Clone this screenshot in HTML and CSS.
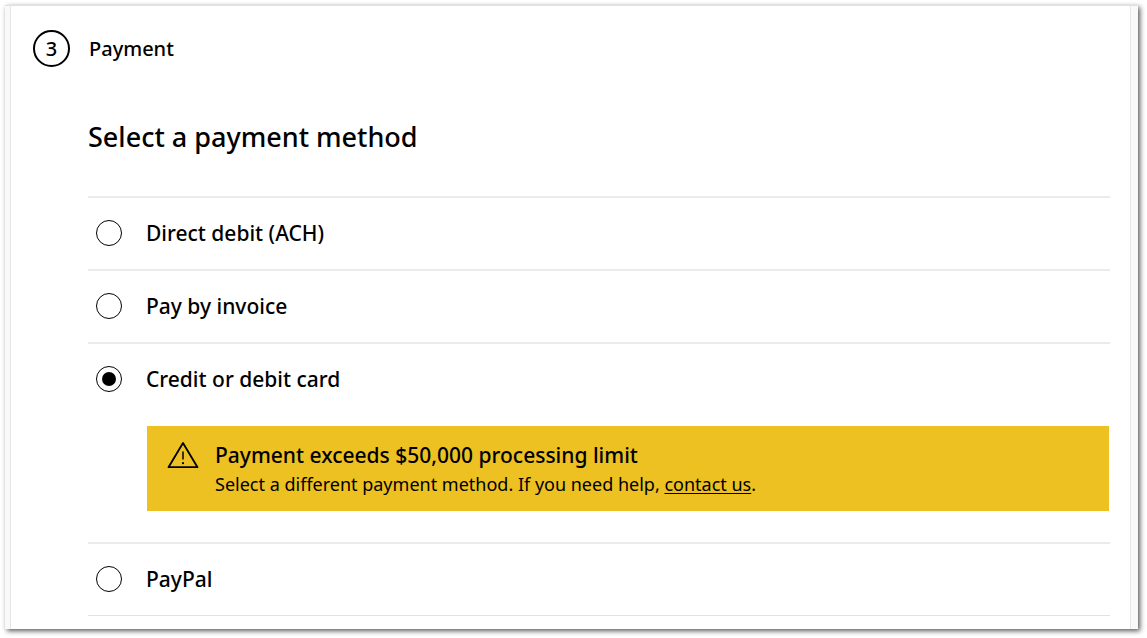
FILE: index.html
```html
<!DOCTYPE html>
<html lang="en">
<head>
  <meta charset="utf-8">
  <meta name="viewport" content="width=device-width, initial-scale=1">
  <title>Payment</title>
  <link rel="stylesheet" href="styles.css">
</head>

<body>

<main class="page">
  <div class="panel">

    <!-- step header -->
    <header class="step">
      <span class="step-number">3</span>
      <h1 class="step-title">Payment</h1>
    </header>

    <form class="payment">
      <h2 class="payment-title" id="payment-title">Select a payment method</h2>

      <ul class="methods" role="radiogroup" aria-labelledby="payment-title">
        <li class="method">
          <label class="method-label">
            <input class="radio" type="radio" name="method" value="ach">
            Direct debit (ACH)
          </label>
        </li>
        <li class="method">
          <label class="method-label">
            <input class="radio" type="radio" name="method" value="invoice">
            Pay by invoice
          </label>
        </li>
        <li class="method">
          <label class="method-label">
            <input class="radio" type="radio" name="method" value="card" checked>
            Credit or debit card
          </label>

          <!-- limit warning -->
          <div class="alert" role="alert">
            <svg class="alert-icon" viewBox="0 0 32 28" width="32" height="28" aria-hidden="true">
              <path d="M16 2 L30.5 26.2 H1.5 Z" fill="none" stroke="currentColor" stroke-width="1.8" stroke-linejoin="round"/>
              <path d="M16 10.5 V18.5" stroke="currentColor" stroke-width="1.5"/>
              <circle cx="16" cy="22.2" r="1.1" fill="currentColor"/>
            </svg>
            <div>
              <p class="alert-title">Payment exceeds $50,000 processing limit</p>
              <p class="alert-text">Select a different payment method. If you need help, <a class="alert-link" href="#">contact us</a>.</p>
            </div>
          </div>
        </li>
        <li class="method">
          <label class="method-label">
            <input class="radio" type="radio" name="method" value="paypal">
            PayPal
          </label>
        </li>
      </ul>
    </form>

  </div>
</main>

</body>
</html>
```

FILE: styles.css
```css
* {
  box-sizing: border-box;
}

body {
  margin: 0;
  padding: 5px 9px 9px 5px;
  background-color: #ffffff;
  color: #000000;
  font-family: "Noto Sans", "Open Sans", sans-serif;
  font-size: 21px;
}

h1, h2, p, ul {
  margin: 0;
  padding: 0;
}

/* Outer sheet with the drop shadow */
.page {
  padding: 0 7px 0 5px;
  background-color: #f9f9f9;
  border-top: 1px solid #e0e0e0;
  box-shadow: 2px 2px 5px rgba(0, 0, 0, 0.65);
}

.panel {
  padding: 24px 20px 13px 22px;
  background-color: #ffffff;
  border-left: 1px solid #e6e6e6;
  border-right: 1px solid #e6e6e6;
}

/* Step header */
.step {
  display: flex;
  align-items: center;
  gap: 19px;
}

.step-number {
  display: flex;
  align-items: center;
  justify-content: center;
  width: 37px;
  height: 37px;
  border: 2px solid #000000;
  border-radius: 50%;
  font-size: 20px;
  font-weight: 500;
}

.step-title {
  font-size: 20px;
  font-weight: 500;
}

/* Payment methods */
.payment {
  padding: 50px 0 0 55px;
}

.payment-title {
  font-size: 27px;
  font-weight: 500;
  line-height: 40px;
}

.methods {
  margin-top: 39px;
  list-style: none;
  border-bottom: 1px solid #e2e2e2;
}

.method {
  border-top: 2px solid #ebebeb;
}

.method-label {
  display: flex;
  align-items: center;
  gap: 24px;
  height: 71px;
  padding: 0 0 2px 8px;
  font-weight: 500;
}

.radio {
  appearance: none;
  display: grid;
  place-content: center;
  width: 26px;
  height: 26px;
  margin: 0;
  border: 1px solid #000000;
  border-radius: 50%;
}

.radio:checked::before {
  content: "";
  width: 14px;
  height: 14px;
  border-radius: 50%;
  background-color: #000000;
}

/* Warning under the card option */
.alert {
  display: flex;
  gap: 16px;
  margin: 11px 1px 31px 59px;
  padding: 15px 20px 12px;
  background-color: #edc122;
}

.alert-icon {
  flex: none;
}

.alert-title {
  font-weight: 500;
  line-height: 28px;
}

.alert-text {
  font-size: 18px;
  line-height: 30px;
}

.alert-link {
  color: inherit;
  text-decoration-thickness: 1px;
  text-underline-offset: 2px;
}
```
